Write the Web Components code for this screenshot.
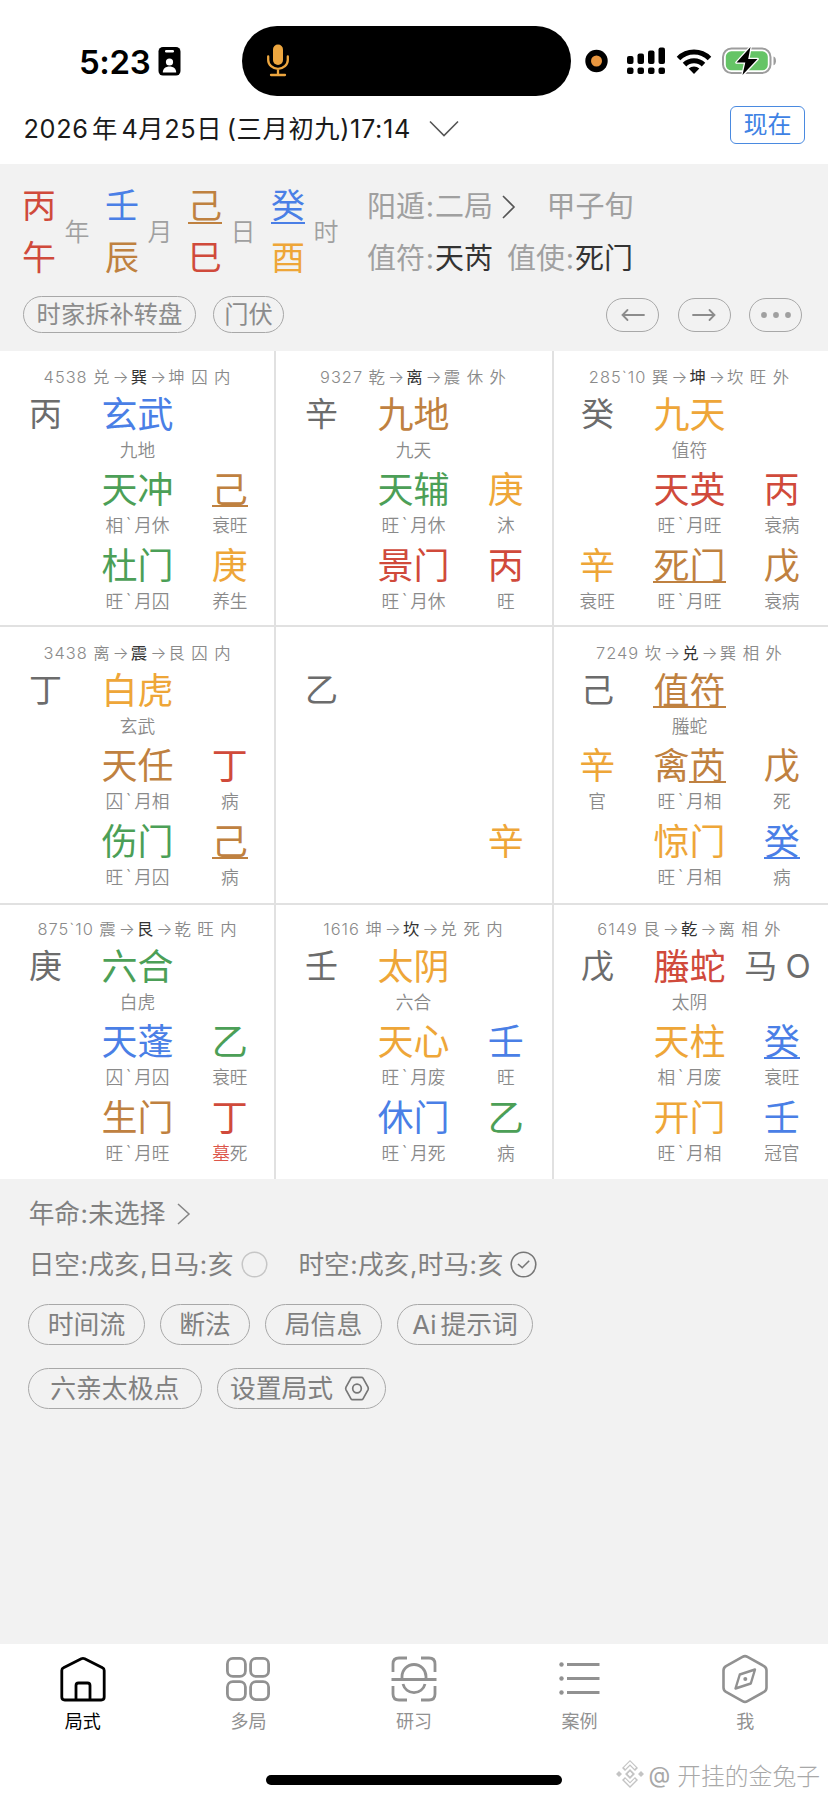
<!DOCTYPE html>
<html lang="zh-CN">
<head>
<meta charset="UTF-8">
<meta name="viewport" content="width=device-width, initial-scale=1">
<title>局式</title>
<style>
  body {
    margin: 0;
    background: #f2f2f2;
    font-family: Inter, "Noto Sans CJK SC", sans-serif;
    --red: #d04a3b;
    --blue: #4a7fe6;
    --brown: #bf8140;
    --orange: #eea638;
    --green: #4c9f57;
  }
</style>
</head>
<body>
<qm-app></qm-app>

<script>
class StatusBar extends HTMLElement {
  constructor() {
    super();
    this.attachShadow({ mode: 'open' });
  }

  connectedCallback() {
    this.shadowRoot.innerHTML = `
      <style>
        :host { display: flex; align-items: center; height: 70px; padding: 26px 48px 0 79px; background: #fff; }
        .time { width: 164px; display: flex; align-items: center; font-size: 33px; font-weight: 600; letter-spacing: -0.4px; line-height: 70px; }
        .time span { margin-top: 1px; }
        .time svg { margin-left: 8px; }
        .island { width: 330px; height: 70px; border-radius: 35px; background: #000; box-sizing: border-box; padding: 17px 0 0 24px; }
        .right { flex: 1; display: flex; align-items: center; margin-left: 14px; }
        svg { display: block; }
      </style>
      <div class="time"><span>5:23</span>
        <svg width="23" height="29" viewBox="0 0 23 29">
          <rect x="0.5" width="22" height="28.5" rx="4.5" fill="#000"/>
          <rect x="7" y="3" width="9" height="2.4" rx="1.2" fill="#fff"/>
          <circle cx="11.5" cy="15" r="3.6" fill="#fff"/>
          <path d="M4.8 25.5c0-4 3-6 6.7-6s6.7 2 6.7 6z" fill="#fff"/>
        </svg>
      </div>
      <div class="island">
        <svg width="24" height="34" viewBox="0 0 24 34" fill="none" stroke="#eda63f" stroke-width="2.3" stroke-linecap="round">
          <rect x="7" y="1.5" width="10" height="20.5" rx="5" fill="#eda63f" stroke="none"/>
          <path d="M2.2 13.5v3.5a9.8 8.8 0 0 0 19.6 0v-3.5M12 26v5M5 32h14"/>
        </svg>
      </div>
      <div class="right">
        <svg width="24" height="24" viewBox="0 0 24 24"><circle cx="11.5" cy="12" r="11.2" fill="#000"/><circle cx="11.5" cy="12" r="5.5" fill="#e9963f"/></svg>
        <svg style="margin-left:17px" width="41" height="28" viewBox="0 0 41 28">
          <rect x="1" y="9" width="6.5" height="8" rx="2"/><rect x="11.5" y="6.5" width="6.5" height="10.5" rx="2"/>
          <rect x="22" y="3.5" width="6.5" height="13.5" rx="2"/><rect x="32.5" y="0.5" width="6.5" height="16.5" rx="2"/>
          <rect x="1" y="20.5" width="6.5" height="6.5" rx="2"/><rect x="11.5" y="20.5" width="6.5" height="6.5" rx="2"/>
          <rect x="22" y="20.5" width="6.5" height="6.5" rx="2"/><rect x="32.5" y="20.5" width="6.5" height="6.5" rx="2"/>
        </svg>
        <svg style="margin-left:8.5px" width="36" height="27" viewBox="0 0 36 27" fill="none" stroke="#000" stroke-width="5">
          <path d="M2.5 10.5a22 22 0 0 1 31 0"/>
          <path d="M8.5 16.6a13.5 13.5 0 0 1 19 0"/>
          <path d="M18 26l-5.3-5.4a7.6 7.6 0 0 1 10.6 0z" fill="#000" stroke="none"/>
        </svg>
        <svg style="margin-left:10.5px" width="58" height="30" viewBox="0 0 58 30">
          <rect x="1" y="2.5" width="47.5" height="24.5" rx="8.5" fill="none" stroke="#9d9d9d" stroke-width="2"/>
          <rect x="3.8" y="5.3" width="42" height="19" rx="5.5" fill="#65c466"/>
          <path d="M51.5 10.5c3.3.8 3.3 8 0 8.8z" fill="#9d9d9d"/>
          <path d="M28.5 1L14.5 16.5h8.8L20.5 29l15-16h-9.3z" fill="#000" stroke="#fff" stroke-width="2.6" paint-order="stroke" stroke-linejoin="round"/>
        </svg>
      </div>
    `;
  }
}
customElements.define('status-bar', StatusBar);

class DateBar extends HTMLElement {
  constructor() {
    super();
    this.attachShadow({ mode: 'open' });
  }

  connectedCallback() {
    this.shadowRoot.innerHTML = `
      <style>
        :host { display: flex; align-items: center; height: 68px; padding: 0 23px 0 23.5px; background: #fff; }
        .date { font-size: 25.3px; line-height: 36px; letter-spacing: 0.62px; color: #1a1a1a; white-space: nowrap; margin-top: -3px; }
        svg { margin: -3px auto 0 18px; }
        button {
          box-sizing: border-box; width: 75px; height: 38px; margin-top: -11px; padding: 0;
          border: 1.5px solid #4a8ae0; border-radius: 6px; background: #fff;
          font: 24px/34px Inter, "Noto Sans CJK SC", sans-serif; color: #3e82e4;
        }
      </style>
      <div class="date"><slot></slot></div>
      <svg width="30" height="18" viewBox="0 0 30 18" fill="none" stroke="#555" stroke-width="1.6"><path d="M1 1.5l14 14 14-14"/></svg>
      <button>现在</button>
    `;
  }
}
customElements.define('date-bar', DateBar);

// 药丸按钮
class PillButton extends HTMLElement {
  constructor() {
    super();
    this.attachShadow({ mode: 'open' });
    this.shadowRoot.innerHTML = `
      <style>
        :host {
          display: flex; align-items: center; justify-content: center; box-sizing: border-box;
          height: 41px; border: 1.3px solid #a8a8a8; border-radius: 21px;
          font-size: 25.8px; line-height: 1; color: #808080; white-space: nowrap;
        }
        :host([small]) { height: 37px; font-size: 24.3px; color: #8c8c8c; }
        :host([icon]) { width: 53px; height: 34px; }
      </style>
      <slot></slot>
    `;
  }
}
customElements.define('pill-button', PillButton);

// 年月日时四柱
class PillarItem extends HTMLElement {
  constructor() {
    super();
    this.attachShadow({ mode: 'open' });
  }

  connectedCallback() {
    const [gan, ganColor, zhi, zhiColor] = this.getAttribute('pillar').split(' ');
    const line = this.hasAttribute('line') ? 'class="line"' : '';
    this.shadowRoot.innerHTML = `
      <style>
        :host { display: flex; align-items: center; width: 83px; }
        .gz { width: 34px; font-size: 34px; line-height: 52px; }
        .gz div { height: 52px; }
        .line { background: linear-gradient(currentColor, currentColor) 0 42px / 34px 2px no-repeat; }
        .unit { margin-left: 8.5px; font-size: 25px; line-height: 30px; color: #a0a0a0; font-weight: 350; }
      </style>
      <div class="gz">
        <div ${line} style="color:var(--${ganColor})">${gan}</div>
        <div style="color:var(--${zhiColor})">${zhi}</div>
      </div>
      <div class="unit"><slot></slot></div>
    `;
  }
}
customElements.define('pillar-item', PillarItem);

class JuHeader extends HTMLElement {
  constructor() {
    super();
    this.attachShadow({ mode: 'open' });
  }

  connectedCallback() {
    this.shadowRoot.innerHTML = `
      <style>
        :host { display: block; height: 187px; box-sizing: border-box; padding-top: 16px; background: #f2f2f2; }
        .top { display: flex; padding-left: 22px; }
        .info { margin-left: 13px; padding-top: 0.5px; font-size: 29px; line-height: 52px; color: #a0a0a0; white-space: nowrap; }
        .info div { display: flex; align-items: center; height: 52px; }
        i { font-style: normal; width: 10px; text-align: center; }
        b { font-weight: 400; color: #333; margin-right: 14px; }
        .tags { display: flex; align-items: center; padding: 11.5px 26px 0 23px; }
        .tags > :nth-child(1) { width: 173px; margin-right: 17px; }
        .tags > :nth-child(2) { width: 71px; margin-right: auto; }
        [icon] + [icon] { margin-left: 18.5px; }
      </style>
      <div class="top">
        <pillar-item pillar="丙 red 午 red">年</pillar-item>
        <pillar-item pillar="壬 blue 辰 brown">月</pillar-item>
        <pillar-item pillar="己 brown 巳 red" line>日</pillar-item>
        <pillar-item pillar="癸 blue 酉 orange" line>时</pillar-item>
        <div class="info">
          <div>阳遁<i>:</i>二局
            <svg style="margin:0 31px 0 8.5px" width="14" height="26" viewBox="0 0 14 26" fill="none" stroke="#555" stroke-width="1.6"><path d="M1 2l11 11-11 11"/></svg>甲子旬</div>
          <div>值符<i>:</i><b>天芮</b>值使<i>:</i><b>死门</b></div>
        </div>
      </div>
      <div class="tags">
        <pill-button small>时家拆补转盘</pill-button>
        <pill-button small>门伏</pill-button>
        <pill-button icon><svg width="24" height="14" viewBox="0 0 24 14" fill="none" stroke="#8c8c8c" stroke-width="1.8" stroke-linecap="round"><path d="M1.5 7h21.5M6.5 2L1.5 7l5 5"/></svg></pill-button>
        <pill-button icon><svg width="24" height="14" viewBox="0 0 24 14" fill="none" stroke="#8c8c8c" stroke-width="1.8" stroke-linecap="round"><path d="M1 7h21.5M17.5 2l5 5-5 5"/></svg></pill-button>
        <pill-button icon><svg width="32" height="8" viewBox="0 0 32 8" fill="#a0a0a0"><circle cx="4" cy="4" r="2.9"/><circle cx="16" cy="4" r="2.9"/><circle cx="28" cy="4" r="2.9"/></svg></pill-button>
      </div>
    `;
  }
}
customElements.define('ju-header', JuHeader);

// 宫格：head = [数字, 前宫, 本宫, 后宫, 旺衰, 内外]
// rows 按 左/中/右 排列，每项 "文字 颜色 小字 line"
class PalaceCell extends HTMLElement {
  constructor() {
    super();
    this.attachShadow({ mode: 'open' });
  }

  set data(value) {
    this._data = value;
    this.render();
  }

  item(str) {
    if (!str) return '<div class="item"></div>';
    const [text, color, sub = '', line] = str.split(' ');
    let inner = text;
    if (line === 'line') inner = `<u>${text}</u>`;
    if (line === 'last') inner = `${text[0]}<u>${text[1]}</u>`;
    const small = sub.replace('`', '<i>`</i>').replace('墓', '<em>墓</em>');
    return `<div class="item"><div class="big" style="color:var(--${color})">${inner}</div><div class="sub">${small}</div></div>`;
  }

  render() {
    const { head, stem, mark, rows } = this._data;
    const top = head ? `${head[0]}<s></s>${head[1]}<i>→</i><b>${head[2]}</b><i>→</i>${head[3]}<s></s>${head[4]}<s></s>${head[5]}` : '';
    this.shadowRoot.innerHTML = `
      <style>
        :host { display: block; background: #fff; padding: var(--cell-top, 11px) 0 0; overflow: hidden; }
        .head { display: flex; justify-content: center; width: 277px; height: 30px; margin-left: var(--cell-left, -1px); line-height: 30px; font-size: 16.4px; letter-spacing: 1px; color: #8a8a8a; font-weight: 350; white-space: nowrap; }
        .head i { font-style: normal; font-size: 17px; width: 20.2px; text-align: center; letter-spacing: 0; }
        .head b { font-weight: 400; color: #333; }
        .head s { width: 5.5px; }
        .grid { display: grid; width: 277px; margin-left: var(--cell-left, -1px); grid-template-columns: repeat(3, 1fr); grid-auto-rows: 75.4px; }
        .item { display: flex; flex-direction: column; align-items: center; white-space: nowrap; }
        .big { font-size: 36px; line-height: 46px; height: 46px; }
        .stem { font-size: 33px; line-height: 45px; color: #6c6c6c; text-align: center; white-space: nowrap; letter-spacing: -0.5px; }
        .stem.mark { margin-left: -9px; }
        u { text-decoration: none; display: inline-block; height: 46px; background: linear-gradient(currentColor, currentColor) 0 38px / 100% 2px no-repeat; }
        .sub { height: 29px; font-size: 17.7px; line-height: 26px; color: #8a8a8a; font-weight: 350; }
        .sub i { display: inline-block; width: 11px; text-align: center; font-style: normal; font-size: 20px; line-height: 20px; }
        em { font-style: normal; color: #dc5549; }
      </style>
      <div class="head">${top}</div>
      <div class="grid">
        <div class="stem">${stem}</div>${this.item(rows[0])}<div class="stem mark">${mark || ''}</div>
        ${rows.slice(1).map(r => this.item(r)).join('')}
      </div>
    `;
  }
}
customElements.define('palace-cell', PalaceCell);

const PALACES = [
  { head: ['4538', '兑', '巽', '坤', '囚', '内'], stem: '丙',
    rows: ['玄武 blue 九地', '', '天冲 green 相`月休', '己 brown 衰旺 line', '', '杜门 green 旺`月囚', '庚 orange 养生'] },
  { head: ['9327', '乾', '离', '震', '休', '外'], stem: '辛',
    rows: ['九地 brown 九天', '', '天辅 green 旺`月休', '庚 orange 沐', '', '景门 red 旺`月休', '丙 red 旺'] },
  { head: ['285`10', '巽', '坤', '坎', '旺', '外'], stem: '癸',
    rows: ['九天 orange 值符', '', '天英 red 旺`月旺', '丙 red 衰病', '辛 orange 衰旺', '死门 brown 旺`月旺 line', '戊 brown 衰病'] },
  { head: ['3438', '离', '震', '艮', '囚', '内'], stem: '丁',
    rows: ['白虎 orange 玄武', '', '天任 brown 囚`月相', '丁 red 病', '', '伤门 green 旺`月囚', '己 brown 病 line'] },
  { stem: '乙', rows: ['', '', '', '', '', '', '辛 orange'] },
  { head: ['7249', '坎', '兑', '巽', '相', '外'], stem: '己',
    rows: ['值符 brown 螣蛇 line', '辛 orange 官', '禽芮 brown 旺`月相 last', '戊 brown 死', '', '惊门 orange 旺`月相', '癸 blue 病 line'] },
  { head: ['875`10', '震', '艮', '乾', '旺', '内'], stem: '庚',
    rows: ['六合 green 白虎', '', '天蓬 blue 囚`月囚', '乙 green 衰旺', '', '生门 brown 旺`月旺', '丁 red 墓死'] },
  { head: ['1616', '坤', '坎', '兑', '死', '内'], stem: '壬',
    rows: ['太阴 orange 六合', '', '天心 orange 旺`月废', '壬 blue 旺', '', '休门 blue 旺`月死', '乙 green 病'] },
  { head: ['6149', '艮', '乾', '离', '相', '外'], stem: '戊', mark: '马 O',
    rows: ['螣蛇 red 太阴', '', '天柱 orange 相`月废', '癸 blue 衰旺 line', '', '开门 orange 旺`月相', '壬 blue 冠官'] },
];

class PalaceBoard extends HTMLElement {
  constructor() {
    super();
    this.attachShadow({ mode: 'open' });
    this.shadowRoot.innerHTML = `
      <style>
        :host { display: grid; grid-template-columns: 274px 276px 274px; grid-template-rows: 274px 276px 274px; gap: 2px; background: #e1e1e1; }
        palace-cell:nth-of-type(3n) { --cell-left: -3px; }
        palace-cell:nth-of-type(n + 7) { --cell-top: 9px; }
      </style>
    `;
  }

  connectedCallback() {
    PALACES.forEach(p => {
      const cell = document.createElement('palace-cell');
      cell.data = p;
      this.shadowRoot.appendChild(cell);
    });
  }
}
customElements.define('palace-board', PalaceBoard);

class JuOptions extends HTMLElement {
  constructor() {
    super();
    this.attachShadow({ mode: 'open' });
  }

  connectedCallback() {
    this.shadowRoot.innerHTML = `
      <style>
        :host { display: block; height: 465px; box-sizing: border-box; padding: 9px 28px 0; font-size: 25.7px; color: #808080; }
        .line { display: flex; align-items: center; height: 51px; line-height: 51px; padding-left: 0.7px; white-space: nowrap; }
        .line i { font-style: normal; width: 8.3px; text-align: center; }
        .chips { display: flex; gap: 15px; margin-top: 14px; }
        .chips + .chips { margin-top: 23px; }
      </style>
      <div class="line">年命<i>:</i>未选择
        <svg style="margin-left:12px" width="14" height="22" viewBox="0 0 14 22" fill="none" stroke="#858585" stroke-width="1.5"><path d="M1 1l11 10L1 21"/></svg></div>
      <div class="line">日空<i>:</i>戌亥<i>,</i>日马<i>:</i>亥
        <svg style="margin:0 30.5px 0 7.5px" width="27" height="27" viewBox="0 0 27 27" fill="none" stroke="#c6c6c6" stroke-width="1.5"><circle cx="13.5" cy="13.5" r="12.3"/></svg>
        时空<i>:</i>戌亥<i>,</i>时马<i>:</i>亥
        <svg style="margin-left:7px" width="27" height="27" viewBox="0 0 27 27" fill="none" stroke="#777" stroke-width="1.6"><circle cx="13.5" cy="13.5" r="12.3"/><path d="M8 13l4.2 3.7 7-7"/></svg></div>
      <div class="chips">
        <pill-button style="width:117px">时间流</pill-button>
        <pill-button style="width:90px">断法</pill-button>
        <pill-button style="width:117px">局信息</pill-button>
        <pill-button style="width:136px">Ai<span style="margin-left:4px">提示词</span></pill-button>
      </div>
      <div class="chips">
        <pill-button style="width:173.5px">六亲太极点</pill-button>
        <pill-button style="width:169px">设置局式<svg style="margin:0 2px 0 11px" width="26" height="25" viewBox="0 0 26 25" fill="none" stroke="#777" stroke-width="1.7" stroke-linejoin="round"><path d="M8.5 1.3h9q1 0 1.5.9l5 9q.6 1.3 0 2.6l-5 9q-.5.9-1.5.9h-9q-1 0-1.5-.9l-5-9q-.6-1.3 0-2.6l5-9q.5-.9 1.5-.9z"/><circle cx="13" cy="12.5" r="4.3"/></svg></pill-button>
      </div>
    `;
  }
}
customElements.define('ju-options', JuOptions);

class TabItem extends HTMLElement {
  constructor() {
    super();
    this.attachShadow({ mode: 'open' });
    this.shadowRoot.innerHTML = `
      <style>
        :host { flex: 1; display: flex; flex-direction: column; align-items: center; color: #919191; font-size: 18px; line-height: 26px; padding-top: 10px; }
        :host([active]) { color: #000; }
        .label { margin-top: 5px; }
      </style>
      <slot name="icon"></slot>
      <div class="label"><slot></slot></div>
    `;
  }
}
customElements.define('tab-item', TabItem);

class TabBar extends HTMLElement {
  constructor() {
    super();
    this.attachShadow({ mode: 'open' });
  }

  connectedCallback() {
    this.shadowRoot.innerHTML = `
      <style>
        :host { position: relative; display: block; height: 156px; background: #fff; }
        nav { display: flex; }
        svg { display: block; fill: none; stroke: currentColor; stroke-width: 2.8; }
        .bar { width: 296px; height: 10px; border-radius: 5px; background: #000; margin: 40px auto 0; }
        .mark {
          position: absolute; right: 8px; bottom: 9px; display: flex; align-items: center; height: 34px;
          font-size: 23.8px; font-weight: 300; color: #a8a8a8; white-space: nowrap; text-shadow: -1px -1px 0 #fff;
        }
        .mark svg { stroke: none; fill: #c4c4c4; margin-right: 3px; }
        .mark span { margin-right: 7px; font-weight: 400; font-size: 22.5px; }
      </style>
      <nav>
        <tab-item active>
          <svg slot="icon" width="50" height="50" viewBox="0 0 50 50" stroke-linejoin="round">
            <path d="M3.8 16.5q0-2 1.7-2.8L23.3 4.8q1.7-.8 3.4 0l17.8 8.9q1.7.8 1.7 2.8V43q0 3-3 3H6.8q-3 0-3-3z"/>
            <path d="M18 46V31.5q0-2.5 2.5-2.5h9q2.5 0 2.5 2.5V46"/>
          </svg>局式
        </tab-item>
        <tab-item>
          <svg slot="icon" width="50" height="50" viewBox="0 0 50 50">
            <rect x="4.4" y="4.4" width="18" height="18" rx="5.5"/><rect x="27.6" y="4.4" width="18" height="18" rx="5.5"/>
            <rect x="4.4" y="27.6" width="18" height="18" rx="5.5"/><rect x="27.6" y="27.6" width="18" height="18" rx="5.5"/>
          </svg>多局
        </tab-item>
        <tab-item>
          <svg slot="icon" width="50" height="50" viewBox="0 0 50 50">
            <path d="M4 18v-8q0-6 6-6h8M32 4h8q6 0 6 6v8M46 32v8q0 6-6 6h-8M18 46h-8q-6 0-6-6v-8M2.5 25.5h45"/>
            <path d="M13 25v-2.5a12 12 0 0 1 24 0V25M14 30a11.3 11.3 0 0 0 22 0"/>
          </svg>研习
        </tab-item>
        <tab-item>
          <svg slot="icon" width="50" height="50" viewBox="0 0 50 50">
            <path d="M12 10.5h32.5M12 24.5h32.5M12 38.5h32.5"/>
            <g fill="currentColor" stroke="none"><circle cx="6.5" cy="10.5" r="2.2"/><circle cx="6.5" cy="24.5" r="2.2"/><circle cx="6.5" cy="38.5" r="2.2"/></g>
          </svg>案例
        </tab-item>
        <tab-item>
          <svg slot="icon" width="50" height="50" viewBox="0 0 50 50" stroke-linejoin="round">
            <path stroke-width="2.6" d="M22.5 2.8q2.5-1.4 5 0L44 12.1q2.5 1.5 2.5 4.4v17q0 2.9-2.5 4.4L27.5 47.2q-2.5 1.4-5 0L6 37.9q-2.5-1.5-2.5-4.4v-17q0-2.9 2.5-4.4z"/>
            <path stroke-width="2.4" d="M35 15.5l-4.2 14-15.3 5 4.3-14z"/><circle cx="25.3" cy="25" r="2" fill="currentColor" stroke="none"/>
          </svg>我
        </tab-item>
      </nav>
      <div class="bar"></div>
      <div class="mark">
        <svg width="30" height="30" viewBox="0 0 30 30">
          <path fill-rule="evenodd" d="M15 1l8 8-3 3-5-5-5 5-3-3zM4 12l3 3-3 3-3-3zM26 12l3 3-3 3-3-3zM15 10l5 5-5 5-5-5zM15 12.6l-2.4 2.4 2.4 2.4 2.4-2.4zM15 29l-8-8 3-3 5 5 5-5 3 3z"/>
          <path fill="#fff" d="M15 2.600l6 6-1.300 1.300-4.700-4.700-4.700 4.700L9 8.600zM15 27l-6-6 1.300-1.300 4.700 4.700 4.700-4.700L21 21z"/>
        </svg>
        <span>@</span>开挂的金兔子
      </div>
    `;
  }
}
customElements.define('tab-bar', TabBar);

class QmApp extends HTMLElement {
  constructor() {
    super();
    this.attachShadow({ mode: 'open' });
  }

  connectedCallback() {
    this.shadowRoot.innerHTML = `
      <style>
        :host { display: block; width: 828px; height: 1800px; overflow: hidden; }
        span { margin: 0 3.5px; }
        span:empty { margin: 0 2.5px 0 2px; }
      </style>
      <status-bar></status-bar>
      <date-bar>2026<span>年</span>4月25日<span></span>(三月初九)17:14</date-bar>
      <ju-header></ju-header>
      <palace-board></palace-board>
      <ju-options></ju-options>
      <tab-bar></tab-bar>
    `;
  }
}
customElements.define('qm-app', QmApp);
</script>
</body>
</html>
